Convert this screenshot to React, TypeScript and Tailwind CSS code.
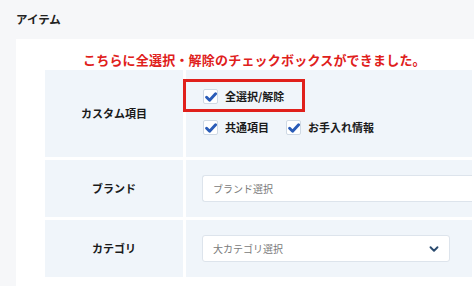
import { ChevronDown } from "lucide-react";

const jp = "font-['Noto_Sans_CJK_JP','Noto_Sans',sans-serif]";

function Check({ label }: { label: string }) {
  return (
    <label className="flex items-center gap-[7px]">
      <span className="flex h-[15px] w-[15px] items-center justify-center rounded-[2px] border border-[#cfd9e4] bg-white">
        <svg viewBox="0 0 12 12" className="h-[12px] w-[12px]">
          <path d="M1.6 6.3 L4.6 9.2 L10.6 2.8" fill="none" stroke="#2a5cb8" strokeWidth="2.9" strokeLinecap="round" strokeLinejoin="round" />
        </svg>
      </span>
      <span className="text-[11px] font-bold leading-none text-[#1a1a1a]">{label}</span>
    </label>
  );
}

export default function App() {
  return (
    <div className={`flex h-[286px] w-[474px] flex-col overflow-hidden bg-[#f6f7f9] ${jp}`}>
      {/* Section title */}
      <header className="flex h-[39px] shrink-0 items-center px-4">
        <h2 className="text-[11.5px] font-bold text-[#222]">アイテム</h2>
      </header>

      {/* White panel */}
      <section className="ml-4 flex-1 bg-white pt-[11px]">
        <p className="pl-[67px] text-[13px] font-bold leading-[20px] tracking-[0.2px] text-[#e0201b]">
          こちらに全選択・解除のチェックボックスができました。
        </p>

        <div className="ml-[29px] mr-[2px] grid grid-cols-[138px_1fr] grid-rows-[87px_57px_57px] gap-[3px]">
          {/* Row 1 */}
          <div className="flex items-center justify-center bg-[#f0f5fa] text-[11px] font-bold text-[#1a1a1a]">
            カスタム項目
          </div>
          <div className="relative flex flex-col gap-[16px] bg-[#f0f5fa] pl-[17px] pt-[19px]">
            <Check label="全選択/解除" />
            <div className="flex items-center gap-[17px]">
              <Check label="共通項目" />
              <Check label="お手入れ情報" />
            </div>
            <div className="pointer-events-none absolute left-[-3px] top-[9px] h-[33px] w-[122px] border-[3px] border-[#e0201b]" />
          </div>

          {/* Row 2 */}
          <div className="flex items-center justify-center bg-[#f0f5fa] text-[11px] font-bold text-[#1a1a1a]">
            ブランド
          </div>
          <div className="flex items-center bg-[#f0f5fa] pl-[16px]">
            <div className="flex h-[27px] w-full items-center rounded-l-[3px] border border-r-0 border-[#dde4ec] bg-white pl-[10px] text-[10px] text-[#7a7a7a]">
              ブランド選択
            </div>
          </div>

          {/* Row 3 */}
          <div className="flex items-center justify-center bg-[#f0f5fa] text-[11px] font-bold text-[#1a1a1a]">
            カテゴリ
          </div>
          <div className="flex items-center bg-[#f0f5fa] pl-[16px]">
            <div className="flex h-[27px] w-[248px] items-center justify-between rounded-[3px] border border-[#dde4ec] bg-white pl-[10px] pr-[8px] text-[10px] text-[#7a7a7a]">
              <span>大カテゴリ選択</span>
              <ChevronDown className="h-[14px] w-[14px] text-[#2a4a6e]" strokeWidth={3.2} />
            </div>
          </div>
        </div>
      </section>
    </div>
  );
}
